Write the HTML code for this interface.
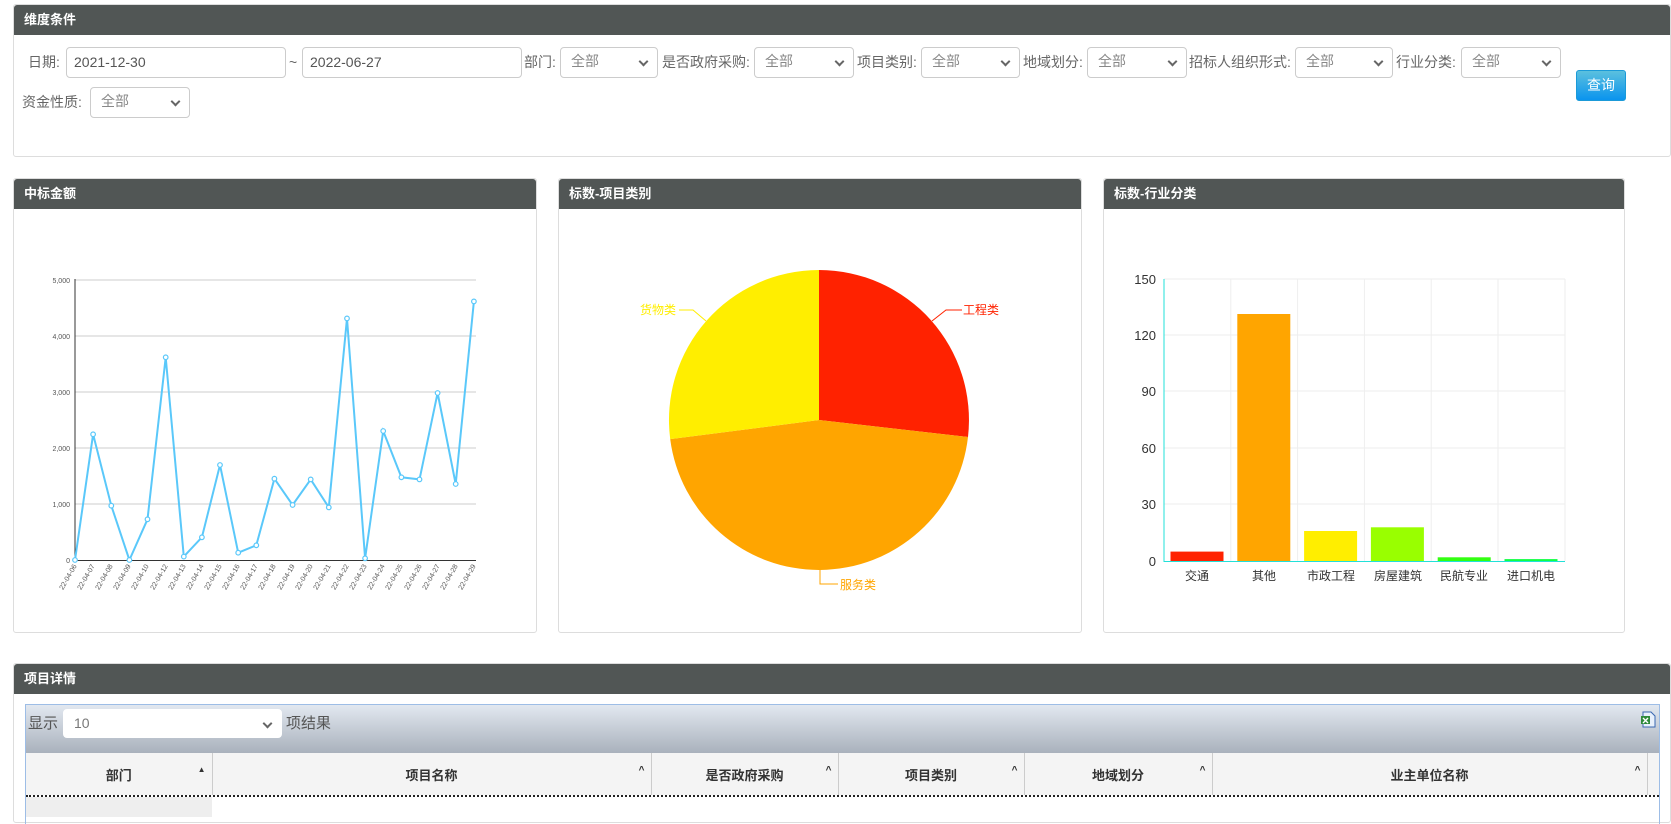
<!DOCTYPE html>
<html><head><meta charset="utf-8"><style>
*{box-sizing:border-box;margin:0;padding:0}
body{width:1671px;height:814px;background:#fff;position:relative;overflow:hidden;font-family:"Liberation Sans","Noto Sans CJK SC",sans-serif;font-size:14px;color:#555}
.abs{position:absolute}
.panel{position:absolute;border:1px solid #ddd;border-radius:3px;background:#fff}
.hd{position:absolute;left:0;right:0;top:0;height:30px;background:#515655;color:#fff;font-size:13px;font-weight:bold;line-height:30px;padding-left:10px;border-radius:3px 3px 0 0}
.inp{position:absolute;height:31px;border:1px solid #ccc;border-radius:4px;background:#fff;color:#555;padding-left:7px;line-height:29px;font-size:14px}
.sel{position:absolute;height:31px;border:1px solid #ccc;border-radius:4px;background:#fff;color:#888;padding-left:10px;line-height:27px;font-size:14px}
.sel:after{content:"";position:absolute;right:10px;top:10px;width:5px;height:5px;border-right:2px solid #666;border-bottom:2px solid #666;transform:rotate(45deg)}
.lb{position:absolute;font-size:14px;color:#666;line-height:31px}
th{font-weight:bold}
</style></head><body>

<div class="panel" style="left:13px;top:4px;width:1658px;height:153px">
<div class="hd">维度条件</div>
</div>
<div class="lb" style="left:28px;top:47px">日期:</div>
<div class="inp" style="left:66px;top:47px;width:220px">2021-12-30</div>
<div class="lb" style="left:289px;top:47px">~</div>
<div class="inp" style="left:302px;top:47px;width:220px">2022-06-27</div>
<div class="lb" style="left:524px;top:47px">部门:</div>
<div class="sel" style="left:560px;top:47px;width:98px">全部</div>
<div class="lb" style="left:662px;top:47px">是否政府采购:</div>
<div class="sel" style="left:754px;top:47px;width:100px">全部</div>
<div class="lb" style="left:857px;top:47px">项目类别:</div>
<div class="sel" style="left:921px;top:47px;width:99px">全部</div>
<div class="lb" style="left:1023px;top:47px">地域划分:</div>
<div class="sel" style="left:1087px;top:47px;width:100px">全部</div>
<div class="lb" style="left:1189px;top:47px">招标人组织形式:</div>
<div class="sel" style="left:1295px;top:47px;width:98px">全部</div>
<div class="lb" style="left:1396px;top:47px">行业分类:</div>
<div class="sel" style="left:1461px;top:47px;width:100px">全部</div>
<div class="abs" style="left:1576px;top:70px;width:50px;height:31px;border-radius:3px;background:linear-gradient(#5bc0de,#0a94ee);border:1px solid #1b9ad8;color:#fff;font-size:14px;line-height:29px;text-align:center">查询</div>
<div class="lb" style="left:22px;top:87px">资金性质:</div>
<div class="sel" style="left:90px;top:87px;width:100px">全部</div>

<div class="panel" style="left:13px;top:178px;width:524px;height:455px"><div class="hd">中标金额</div></div>
<div class="panel" style="left:558px;top:178px;width:524px;height:455px"><div class="hd">标数-项目类别</div></div>
<div class="panel" style="left:1103px;top:178px;width:522px;height:455px"><div class="hd">标数-行业分类</div></div>

<svg class="abs" style="left:0;top:0" width="1671" height="814">
<g stroke="#ccc" stroke-width="1">
<line x1="75" y1="280" x2="476" y2="280"/><line x1="75" y1="336" x2="476" y2="336"/><line x1="75" y1="392" x2="476" y2="392"/><line x1="75" y1="448" x2="476" y2="448"/><line x1="75" y1="504" x2="476" y2="504"/>
</g>
<line x1="75" y1="279" x2="75" y2="561" stroke="#333"/>
<line x1="75" y1="560.5" x2="476" y2="560.5" stroke="#333"/>
<g font-size="7" fill="#555" text-anchor="end">
<text x="70" y="283">5,000</text><text x="70" y="339">4,000</text><text x="70" y="395">3,000</text><text x="70" y="451">2,000</text><text x="70" y="507">1,000</text><text x="70" y="563">0</text>
</g>
<polyline fill="none" stroke="#5ac8fa" stroke-width="2" points="75,560 93.1,434.3 111.3,505.7 129.4,560 147.5,519.3 165.7,357.3 183.8,556.6 201.9,537.3 220,465 238.2,552.7 256.3,545.3 274.4,478.7 292.6,505 310.7,479.4 328.8,507.4 347,318.4 365.1,558.3 383.2,431 401.4,477.3 419.5,479.4 437.6,393 455.7,484 473.9,301.4"/>
<g fill="#fff" stroke="#5ac8fa" stroke-width="1.2">
<circle cx="75" cy="560" r="2.3"/><circle cx="93.1" cy="434.3" r="2.3"/><circle cx="111.3" cy="505.7" r="2.3"/><circle cx="129.4" cy="560" r="2.3"/><circle cx="147.5" cy="519.3" r="2.3"/><circle cx="165.7" cy="357.3" r="2.3"/><circle cx="183.8" cy="556.6" r="2.3"/><circle cx="201.9" cy="537.3" r="2.3"/><circle cx="220" cy="465" r="2.3"/><circle cx="238.2" cy="552.7" r="2.3"/><circle cx="256.3" cy="545.3" r="2.3"/><circle cx="274.4" cy="478.7" r="2.3"/><circle cx="292.6" cy="505" r="2.3"/><circle cx="310.7" cy="479.4" r="2.3"/><circle cx="328.8" cy="507.4" r="2.3"/><circle cx="347" cy="318.4" r="2.3"/><circle cx="365.1" cy="558.3" r="2.3"/><circle cx="383.2" cy="431" r="2.3"/><circle cx="401.4" cy="477.3" r="2.3"/><circle cx="419.5" cy="479.4" r="2.3"/><circle cx="437.6" cy="393" r="2.3"/><circle cx="455.7" cy="484" r="2.3"/><circle cx="473.9" cy="301.4" r="2.3"/>
</g>
<g font-size="7" fill="#555" text-anchor="end">
<text transform="translate(77,566) rotate(-60)">22-04-06</text><text transform="translate(95,566) rotate(-60)">22-04-07</text><text transform="translate(113,566) rotate(-60)">22-04-08</text><text transform="translate(131,566) rotate(-60)">22-04-09</text><text transform="translate(149,566) rotate(-60)">22-04-10</text><text transform="translate(168,566) rotate(-60)">22-04-12</text><text transform="translate(186,566) rotate(-60)">22-04-13</text><text transform="translate(204,566) rotate(-60)">22-04-14</text><text transform="translate(222,566) rotate(-60)">22-04-15</text><text transform="translate(240,566) rotate(-60)">22-04-16</text><text transform="translate(258,566) rotate(-60)">22-04-17</text><text transform="translate(276,566) rotate(-60)">22-04-18</text><text transform="translate(295,566) rotate(-60)">22-04-19</text><text transform="translate(313,566) rotate(-60)">22-04-20</text><text transform="translate(331,566) rotate(-60)">22-04-21</text><text transform="translate(349,566) rotate(-60)">22-04-22</text><text transform="translate(367,566) rotate(-60)">22-04-23</text><text transform="translate(385,566) rotate(-60)">22-04-24</text><text transform="translate(403,566) rotate(-60)">22-04-25</text><text transform="translate(422,566) rotate(-60)">22-04-26</text><text transform="translate(440,566) rotate(-60)">22-04-27</text><text transform="translate(458,566) rotate(-60)">22-04-28</text><text transform="translate(476,566) rotate(-60)">22-04-29</text>
</g>

<path d="M819,420 L819,270 A150,150 0 0 1 968,437 Z" fill="#ff2200"/>
<path d="M819,420 L968,437 A150,150 0 0 1 670.2,439.1 Z" fill="#ffa500"/>
<path d="M819,420 L670.2,439.1 A150,150 0 0 1 819,270 Z" fill="#ffee00"/>
<polyline fill="none" stroke="#ff2200" points="932,321 946,310 962,310"/>
<polyline fill="none" stroke="#ffee00" points="706,321 693,310 679,310"/>
<polyline fill="none" stroke="#ffa500" points="820,570 820,584 838,584"/>
<g font-size="12">
<text x="963" y="314" fill="#ff2200">工程类</text>
<text x="640" y="314" fill="#ffee00">货物类</text>
<text x="840" y="589" fill="#ffa500">服务类</text>
</g>

<g stroke="#eee">
<line x1="1164" y1="279" x2="1565" y2="279"/><line x1="1164" y1="335" x2="1565" y2="335"/><line x1="1164" y1="391" x2="1565" y2="391"/><line x1="1164" y1="448" x2="1565" y2="448"/><line x1="1164" y1="504" x2="1565" y2="504"/>
<line x1="1230.8" y1="279" x2="1230.8" y2="561"/><line x1="1297.6" y1="279" x2="1297.6" y2="561"/><line x1="1364.4" y1="279" x2="1364.4" y2="561"/><line x1="1431.2" y1="279" x2="1431.2" y2="561"/><line x1="1498" y1="279" x2="1498" y2="561"/><line x1="1565" y1="279" x2="1565" y2="561"/>
</g>
<rect x="1170.5" y="551.6" width="53" height="9.4" fill="#ff2200"/>
<rect x="1237.3" y="314" width="53" height="247" fill="#ffa500"/>
<rect x="1304.1" y="531" width="53" height="30" fill="#ffee00"/>
<rect x="1370.9" y="527.3" width="53" height="33.7" fill="#99ff00"/>
<rect x="1437.7" y="557.3" width="53" height="3.7" fill="#33ff11"/>
<rect x="1504.5" y="559.1" width="53" height="1.9" fill="#11ff44"/>
<line x1="1164" y1="279" x2="1164" y2="562" stroke="#22e0d8"/>
<line x1="1164" y1="561.5" x2="1565" y2="561.5" stroke="#22e0d8"/>
<g font-size="13" fill="#333" text-anchor="end">
<text x="1156" y="284">150</text><text x="1156" y="340">120</text><text x="1156" y="396">90</text><text x="1156" y="453">60</text><text x="1156" y="509">30</text><text x="1156" y="566">0</text>
</g>
<g font-size="12" fill="#333" text-anchor="middle">
<text x="1197" y="580">交通</text><text x="1264" y="580">其他</text><text x="1331" y="580">市政工程</text><text x="1398" y="580">房屋建筑</text><text x="1464" y="580">民航专业</text><text x="1531" y="580">进口机电</text>
</g>
</svg>

<div class="panel" style="left:13px;top:663px;width:1658px;height:160px"><div class="hd">项目详情</div></div>
<div class="abs" style="left:25px;top:704px;width:1635px;height:120px;border:1px solid #9dbde6;border-bottom:none"></div>
<div class="abs" style="left:26px;top:705px;width:1633px;height:48px;background:linear-gradient(#e2e8f0,#a9b1bc)"></div>
<div class="abs" style="left:28px;top:710px;font-size:15px;color:#555;line-height:28px">显示</div>
<div class="sel" style="left:63px;top:709px;width:219px;height:29px;border-radius:4px;border-color:#fff;color:#777">10</div>
<div class="abs" style="left:286px;top:710px;font-size:15px;color:#555;line-height:28px">项结果</div>
<svg class="abs" style="left:1640px;top:711px" width="16" height="17"><path d="M3 1h8l4 4v11H3z" fill="#e8f0fb" stroke="#3a67b1"/><rect x="1" y="5" width="9" height="8" fill="#2f8a3a"/><path d="M3 7l5 5M8 7l-5 5" stroke="#fff" stroke-width="1.4"/></svg>
<table class="abs" style="left:26px;top:753px;width:1633px;height:42px;border-collapse:collapse;background:#f4f4f4;font-size:13px;color:#333">
<tr style="height:41px">
<th style="width:186px;border-right:1px solid #ccc;position:relative">部门<span style="position:absolute;right:6px;font-size:8px">▲</span></th>
<th style="width:439px;border-right:1px solid #ccc;position:relative">项目名称<span style="position:absolute;right:6px;font-size:10px">^</span></th>
<th style="width:187px;border-right:1px solid #ccc;position:relative">是否政府采购<span style="position:absolute;right:6px;font-size:10px">^</span></th>
<th style="width:186px;border-right:1px solid #ccc;position:relative">项目类别<span style="position:absolute;right:6px;font-size:10px">^</span></th>
<th style="width:188px;border-right:1px solid #ccc;position:relative">地域划分<span style="position:absolute;right:6px;font-size:10px">^</span></th>
<th style="width:435px;border-right:1px solid #ccc;position:relative">业主单位名称<span style="position:absolute;right:6px;font-size:10px">^</span></th>
<th></th></tr></table>
<div class="abs" style="left:26px;top:795px;width:1633px;border-top:2px dotted #222"></div>
<div class="abs" style="left:26px;top:797px;width:186px;height:20px;background:#eee"></div>
</body></html>
